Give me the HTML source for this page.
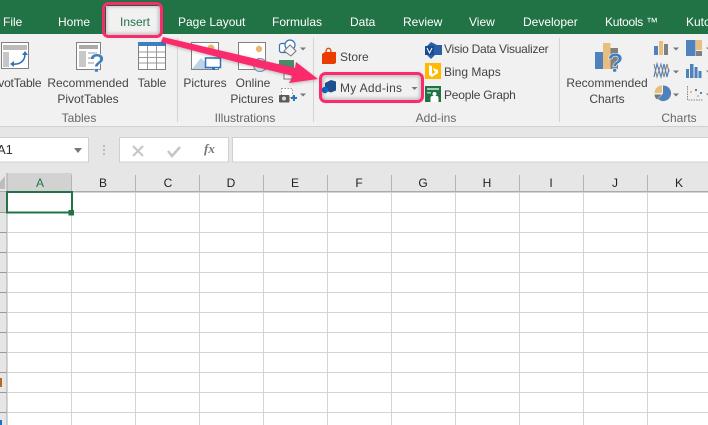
<!DOCTYPE html>
<html><head><meta charset="utf-8">
<style>
html,body{margin:0;padding:0;width:708px;height:425px;overflow:hidden;background:#fff}
body{font-family:"Liberation Sans",sans-serif;position:relative}
.t{position:absolute;white-space:nowrap;font-size:12px;line-height:16px;color:#444}
.c{transform:translateX(-50%);text-align:center}
.tab{color:#fff;top:14px;font-size:12px}
.g{color:#666;top:110px}
#art{position:absolute;left:0;top:0}
</style></head><body>
<svg id="art" width="708" height="425" viewBox="0 0 708 425">
<rect width="708" height="425" fill="#fff"/>
<rect width="708" height="34" fill="#217346"/>
<rect y="34" width="708" height="92" fill="#f1f1f1"/>
<rect y="126" width="708" height="1" fill="#d0d0d0"/>
<rect y="127" width="708" height="46" fill="#e6e6e6"/>
<rect x="106" y="6" width="54" height="28" fill="#f1f1f1"/>
<!-- ribbon separators -->
<g fill="#d4d4d4"><rect x="177" y="38" width="1" height="84"/><rect x="313" y="38" width="1" height="84"/><rect x="559" y="38" width="1" height="84"/></g>
<!-- formula bar -->
<rect x="-2" y="137.500" width="90.500" height="24.500" fill="#fff" stroke="#d0d0d0"/>
<path d="M74 148h8l-4 5z" fill="#777"/>
<g fill="#bbb"><rect x="103" y="145" width="2" height="2"/><rect x="103" y="149" width="2" height="2"/><rect x="103" y="153" width="2" height="2"/></g>
<rect x="119.500" y="137.500" width="109" height="24.500" fill="#fff" stroke="#d0d0d0"/>
<rect x="232.500" y="137.500" width="480" height="24.500" fill="#fff" stroke="#d0d0d0"/>
<path d="M133 146l10 10M143 146l-10 10" stroke="#c6c6c6" stroke-width="2" fill="none"/>
<path d="M168 151l4 5 8-9" stroke="#c6c6c6" stroke-width="2.500" fill="none"/>
<!-- sheet headers -->
<rect y="173" width="708" height="19" fill="#e6e6e6"/>
<rect x="7" y="173" width="65" height="19" fill="#d2d2d2"/>
<rect y="191" width="708" height="1.500" fill="#ababab"/>
<rect y="192" width="7" height="233" fill="#e6e6e6"/>
<rect x="6.500" y="173" width="1" height="252" fill="#a8a8a8"/>
<rect x="0" y="192" width="7" height="20" fill="#d2d2d2"/>
<path d="M5 176v13H-6z" fill="#bdbdbd"/>
<!-- grid -->
<g fill="#d4d4d4">
<rect x="71" y="192" width="1" height="233"/><rect x="135" y="192" width="1" height="233"/><rect x="199" y="192" width="1" height="233"/><rect x="263" y="192" width="1" height="233"/><rect x="327" y="192" width="1" height="233"/><rect x="391" y="192" width="1" height="233"/><rect x="455" y="192" width="1" height="233"/><rect x="519" y="192" width="1" height="233"/><rect x="583" y="192" width="1" height="233"/><rect x="647" y="192" width="1" height="233"/>
<rect x="7" y="212" width="701" height="1"/><rect x="7" y="232" width="701" height="1"/><rect x="7" y="252" width="701" height="1"/><rect x="7" y="272" width="701" height="1"/><rect x="7" y="292" width="701" height="1"/><rect x="7" y="312" width="701" height="1"/><rect x="7" y="332" width="701" height="1"/><rect x="7" y="352" width="701" height="1"/><rect x="7" y="372" width="701" height="1"/><rect x="7" y="392" width="701" height="1"/><rect x="7" y="412" width="701" height="1"/>
</g>
<g fill="#b4b4b4"><rect x="71" y="175" width="1" height="16"/><rect x="135" y="175" width="1" height="16"/><rect x="199" y="175" width="1" height="16"/><rect x="263" y="175" width="1" height="16"/><rect x="327" y="175" width="1" height="16"/><rect x="391" y="175" width="1" height="16"/><rect x="455" y="175" width="1" height="16"/><rect x="519" y="175" width="1" height="16"/><rect x="583" y="175" width="1" height="16"/><rect x="647" y="175" width="1" height="16"/></g>
<g fill="#9a9a9a"><rect y="212" width="7" height="1"/><rect y="232" width="7" height="1"/><rect y="252" width="7" height="1"/><rect y="272" width="7" height="1"/><rect y="292" width="7" height="1"/><rect y="312" width="7" height="1"/><rect y="332" width="7" height="1"/><rect y="352" width="7" height="1"/><rect y="372" width="7" height="1"/><rect y="392" width="7" height="1"/><rect y="412" width="7" height="1"/></g>
<rect x="0" y="378" width="2" height="9" fill="#b86a22"/><rect x="0" y="420" width="2" height="5" fill="#1a73c8"/>
<!-- selected cell -->
<rect x="7" y="192" width="65" height="20.500" fill="#fff" stroke="#217346" stroke-width="2"/>
<rect x="68.500" y="210" width="5.500" height="5.500" fill="#217346"/>
<!-- PivotTable icon -->
<rect x="1.500" y="42.500" width="27" height="26" fill="#fff" stroke="#808080"/>
<rect x="3" y="45" width="24" height="5" fill="#bbb"/><rect x="3" y="52" width="6" height="15" fill="#c6c6c6"/>
<path d="M12 64c8 1 13-3 13-10" stroke="#2f75b5" stroke-width="1.600" fill="none"/>
<path d="M10 64l4-3v6zM25 51l-3 4h6z" fill="#2f75b5"/>
<!-- Recommended PivotTable icon -->
<rect x="76.500" y="42.500" width="24" height="27" fill="#fff" stroke="#808080"/>
<rect x="79" y="45" width="19" height="4" fill="#aaa"/><rect x="79" y="51" width="7" height="16" fill="#c8c8c8"/><rect x="88" y="52" width="9" height="2" fill="#ccc"/><rect x="88" y="57" width="6" height="2" fill="#ccc"/><rect x="88" y="62" width="6" height="2" fill="#ccc"/>
<text x="89" y="72" font-family="Liberation Sans" font-size="26" font-weight="bold" fill="#3f7fbf" stroke="#f1f1f1" stroke-width=".5">?</text>
<!-- Table icon -->
<rect x="138.500" y="42.500" width="27" height="27" fill="#fff" stroke="#808080"/>
<rect x="138" y="42" width="28" height="4" fill="#3f7fbf"/>
<path d="M139 52h26M139 57.500h26M139 63h26M147.500 46v23M156.500 46v23" stroke="#999" fill="none"/>
<!-- Pictures icon -->
<rect x="191.500" y="42.500" width="27" height="27" fill="#fff" stroke="#808080"/>
<path d="M192 69l9-11 8 8 3 3z" fill="#bed3e8"/>
<circle cx="211" cy="48" r="3.500" fill="#e8b873"/>
<rect x="205.500" y="58" width="15" height="9.500" fill="#fff" stroke="#2f75b5" stroke-width="1.500"/>
<rect x="212" y="68" width="3" height="2" fill="#2f75b5"/>
<!-- Online Pictures icon -->
<rect x="238.500" y="42.500" width="27" height="27" fill="#fff" stroke="#808080"/>
<circle cx="259" cy="49" r="3.200" fill="#e8b873"/>
<circle cx="260" cy="65" r="6.500" fill="#dfe8f0" stroke="#6a8fb0"/>
<!-- shapes -->
<rect x="279.500" y="43.500" width="9" height="9" rx="2" fill="#fff" stroke="#2f75b5" stroke-width="1.200"/>
<circle cx="290" cy="45" r="5" fill="#fff" stroke="#2f75b5" stroke-width="1.200"/>
<path d="M284 51l6-6 6 6-5 5z" fill="#f4f4f4" stroke="#777"/>
<path d="M300 47.500h6l-3 3z" fill="#777"/>
<rect x="279" y="60" width="15" height="9" fill="#4a8c6a"/>
<rect x="284" y="70" width="8" height="9" fill="#fff" stroke="#777"/>
<!-- screenshot -->
<rect x="281.500" y="88.500" width="11" height="9" fill="#fff" stroke="#999" stroke-dasharray="1.500 1.500"/>
<rect x="279" y="95" width="10.500" height="7.500" rx="1" fill="#5b5b5b"/><circle cx="284" cy="98.500" r="2" fill="#ddd"/>
<path d="M294 95v6M291 98h6" stroke="#2f75b5" stroke-width="2"/>
<path d="M300 93.500h6l-3 3z" fill="#777"/>
<!-- Store icon -->
<path d="M322 54l3-2h11v11l-2 1h-12z" fill="#eb3c00"/>
<path d="M326 52c0-5 5-5 5 0" stroke="#eb3c00" stroke-width="1.300" fill="none"/>
<!-- My Add-ins icon -->
<path d="M325 83l6-3 5 1.500v9l-5 2-6-2z" fill="#1f4e8c"/>
<circle cx="325" cy="90" r="3.200" fill="#0f68c4"/>
<path d="M411.500 87h6l-3 3z" fill="#777"/>
<!-- Visio -->
<path d="M431 42l6 3h5v10h-7l-4 4-4-4h-1v-8z" fill="#2b5ea8"/>
<rect x="425" y="46" width="9" height="9" fill="#1a4a90"/><path d="M427 48l2.500 5 2.500-5" stroke="#fff" fill="none"/>
<!-- Bing -->
<rect x="425" y="63" width="16" height="16" fill="#ffb900"/>
<path d="M429 65l3 1v8l4-2-2-1-1-3 5 2v3l-6 4-3-2z" fill="#fff"/>
<!-- People Graph -->
<rect x="425" y="86" width="16" height="16" fill="#217346"/>
<rect x="427" y="88" width="12" height="2" fill="#9fd0b4"/><rect x="427" y="92" width="4" height="1.500" fill="#9fd0b4"/>
<circle cx="434.500" cy="94" r="2" fill="#fff"/><path d="M430.500 102v-4q0-2 2-2h4q2 0 2 2v4z" fill="#fff"/>
<!-- Recommended Charts -->
<rect x="595" y="52" width="8" height="17" fill="#4f81bd"/>
<rect x="603" y="43" width="7.500" height="26" fill="#e8be7d"/>
<rect x="610.500" y="48" width="7.500" height="21" fill="#808080"/>
<text x="607" y="72" font-family="Liberation Sans" font-size="27" font-weight="bold" fill="#3f7fbf" stroke="#f1f1f1" stroke-width=".6">?</text>
<!-- small charts -->
<rect x="654" y="46" width="4" height="9" fill="#4f81bd"/><rect x="659" y="41" width="4" height="14" fill="#e8be7d"/><rect x="664" y="44" width="4" height="11" fill="#808080"/>
<path d="M673 47.500h6l-3 3z" fill="#777"/>
<path d="M654 77l3-13 4 13 3-13 3 13 2-8" stroke="#4f81bd" stroke-width="1.200" fill="none"/><path d="M654 64l3 13 4-13 3 13 3-13 2 8" stroke="#808080" fill="none"/>
<path d="M673 70.500h6l-3 3z" fill="#777"/>
<path d="M663 85.500a7.800 7.800 0 1 1-5 13.500l5-5.500z" fill="#4f81bd"/>
<path d="M662 85.500v7.500l-7.500 0a7.500 7.500 0 0 1 7.500-7.500z" fill="#e8be7d"/>
<path d="M654.500 94.500h7l-4.500 5a7 7 0 0 1-2.500-5z" fill="#777"/>
<path d="M673 93.500h6l-3 3z" fill="#777"/>
<rect x="686" y="40" width="9.500" height="16" fill="#4f81bd"/><rect x="696" y="40" width="6" height="10" fill="#e8be7d"/><rect x="696" y="51" width="6" height="5" fill="#808080"/>
<path d="M706 47.500h2v2z" fill="#777"/>
<rect x="686" y="69" width="3" height="9" fill="#4f81bd"/><rect x="690" y="64" width="3.500" height="14" fill="#4f81bd"/><rect x="694.500" y="67" width="3" height="11" fill="#4f81bd"/><rect x="698.500" y="71" width="3" height="7" fill="#4f81bd"/>
<path d="M687.500 86v14h16" stroke="#888" stroke-dasharray="1.500 1" fill="none"/>
<g fill="#e8be7d"><rect x="690" y="91" width="2" height="2"/><rect x="697" y="95" width="2" height="2"/></g><g fill="#4f81bd"><rect x="695" y="89" width="2" height="2"/><rect x="700" y="92" width="2" height="2"/></g>
<path d="M706 70.500h2v2zM706 93.500h2v2z" fill="#777"/>
<!-- pink highlights -->
<defs>
<filter id="s" x="-20%" y="-20%" width="140%" height="140%"><feDropShadow dx="0" dy="1" stdDeviation="1.500" flood-color="#000" flood-opacity=".25"/></filter>
<filter id="i" x="-20%" y="-40%" width="140%" height="180%"><feGaussianBlur stdDeviation="1.500"/></filter>
</defs>
<rect x="105" y="5" width="55" height="30" rx="4" fill="none" stroke="#000" stroke-opacity=".25" stroke-width="3" filter="url(#i)"/>
<rect x="322" y="75" width="99" height="25" rx="4" fill="none" stroke="#000" stroke-opacity=".25" stroke-width="3" filter="url(#i)"/>
<path d="M163 37L295 68 296 62 318 79 289 83 293 76 240 63 161 42z" fill="#fb2a6c" filter="url(#s)"/>
<rect x="103.500" y="3.500" width="58" height="33" rx="5" fill="none" stroke="#fb2a6c" stroke-width="3"/>
<rect x="320.500" y="73.500" width="102" height="28" rx="5" fill="none" stroke="#fb2a6c" stroke-width="3"/>
</svg>
<div class="t tab" style="left:3px">File</div>
<div class="t tab" style="left:58px">Home</div>
<div class="t tab" style="left:120px;color:#217346">Insert</div>
<div class="t tab" style="left:178px">Page Layout</div>
<div class="t tab" style="left:272px">Formulas</div>
<div class="t tab" style="left:350px">Data</div>
<div class="t tab" style="left:403px">Review</div>
<div class="t tab" style="left:469px">View</div>
<div class="t tab" style="left:523px">Developer</div>
<div class="t tab" style="left:605px;letter-spacing:-.3px">Kutools ™</div>
<div class="t tab" style="left:686px">Kutools</div>
<div class="t" style="left:-12px;top:75px;letter-spacing:-.2px">PivotTable</div>
<div class="t c" style="left:88px;top:75px">Recommended</div>
<div class="t c" style="left:88px;top:91px">PivotTables</div>
<div class="t c" style="left:152px;top:75px">Table</div>
<div class="t c" style="left:205px;top:75px">Pictures</div>
<div class="t c" style="left:253px;top:75px">Online</div>
<div class="t c" style="left:252px;top:91px">Pictures</div>
<div class="t" style="left:340px;top:49px">Store</div>
<div class="t" style="left:340px;top:80px;letter-spacing:.3px">My Add-ins</div>
<div class="t" style="left:444px;top:41px;letter-spacing:-.25px">Visio Data Visualizer</div>
<div class="t" style="left:444px;top:64px">Bing Maps</div>
<div class="t" style="left:444px;top:87px;letter-spacing:-.2px">People Graph</div>
<div class="t c" style="left:607px;top:75px">Recommended</div>
<div class="t c" style="left:607px;top:91px">Charts</div>
<div class="t g c" style="left:79px">Tables</div>
<div class="t g c" style="left:245px">Illustrations</div>
<div class="t g c" style="left:436px">Add-ins</div>
<div class="t g c" style="left:679px">Charts</div>
<div class="t" style="left:-3px;top:142px;color:#333;font-size:13px">A1</div>
<div class="t" style="left:204px;top:141px;font-family:'Liberation Serif',serif;font-style:italic;font-weight:bold;font-size:13px;color:#777">fx</div>
<div class="t c" style="left:40px;top:175px;color:#217346">A</div>
<div class="t c" style="left:103px;top:175px;color:#222">B</div>
<div class="t c" style="left:168px;top:175px;color:#222">C</div>
<div class="t c" style="left:231px;top:175px;color:#222">D</div>
<div class="t c" style="left:295px;top:175px;color:#222">E</div>
<div class="t c" style="left:359px;top:175px;color:#222">F</div>
<div class="t c" style="left:423px;top:175px;color:#222">G</div>
<div class="t c" style="left:487px;top:175px;color:#222">H</div>
<div class="t c" style="left:551px;top:175px;color:#222">I</div>
<div class="t c" style="left:615px;top:175px;color:#222">J</div>
<div class="t c" style="left:679px;top:175px;color:#222">K</div>
</body></html>
